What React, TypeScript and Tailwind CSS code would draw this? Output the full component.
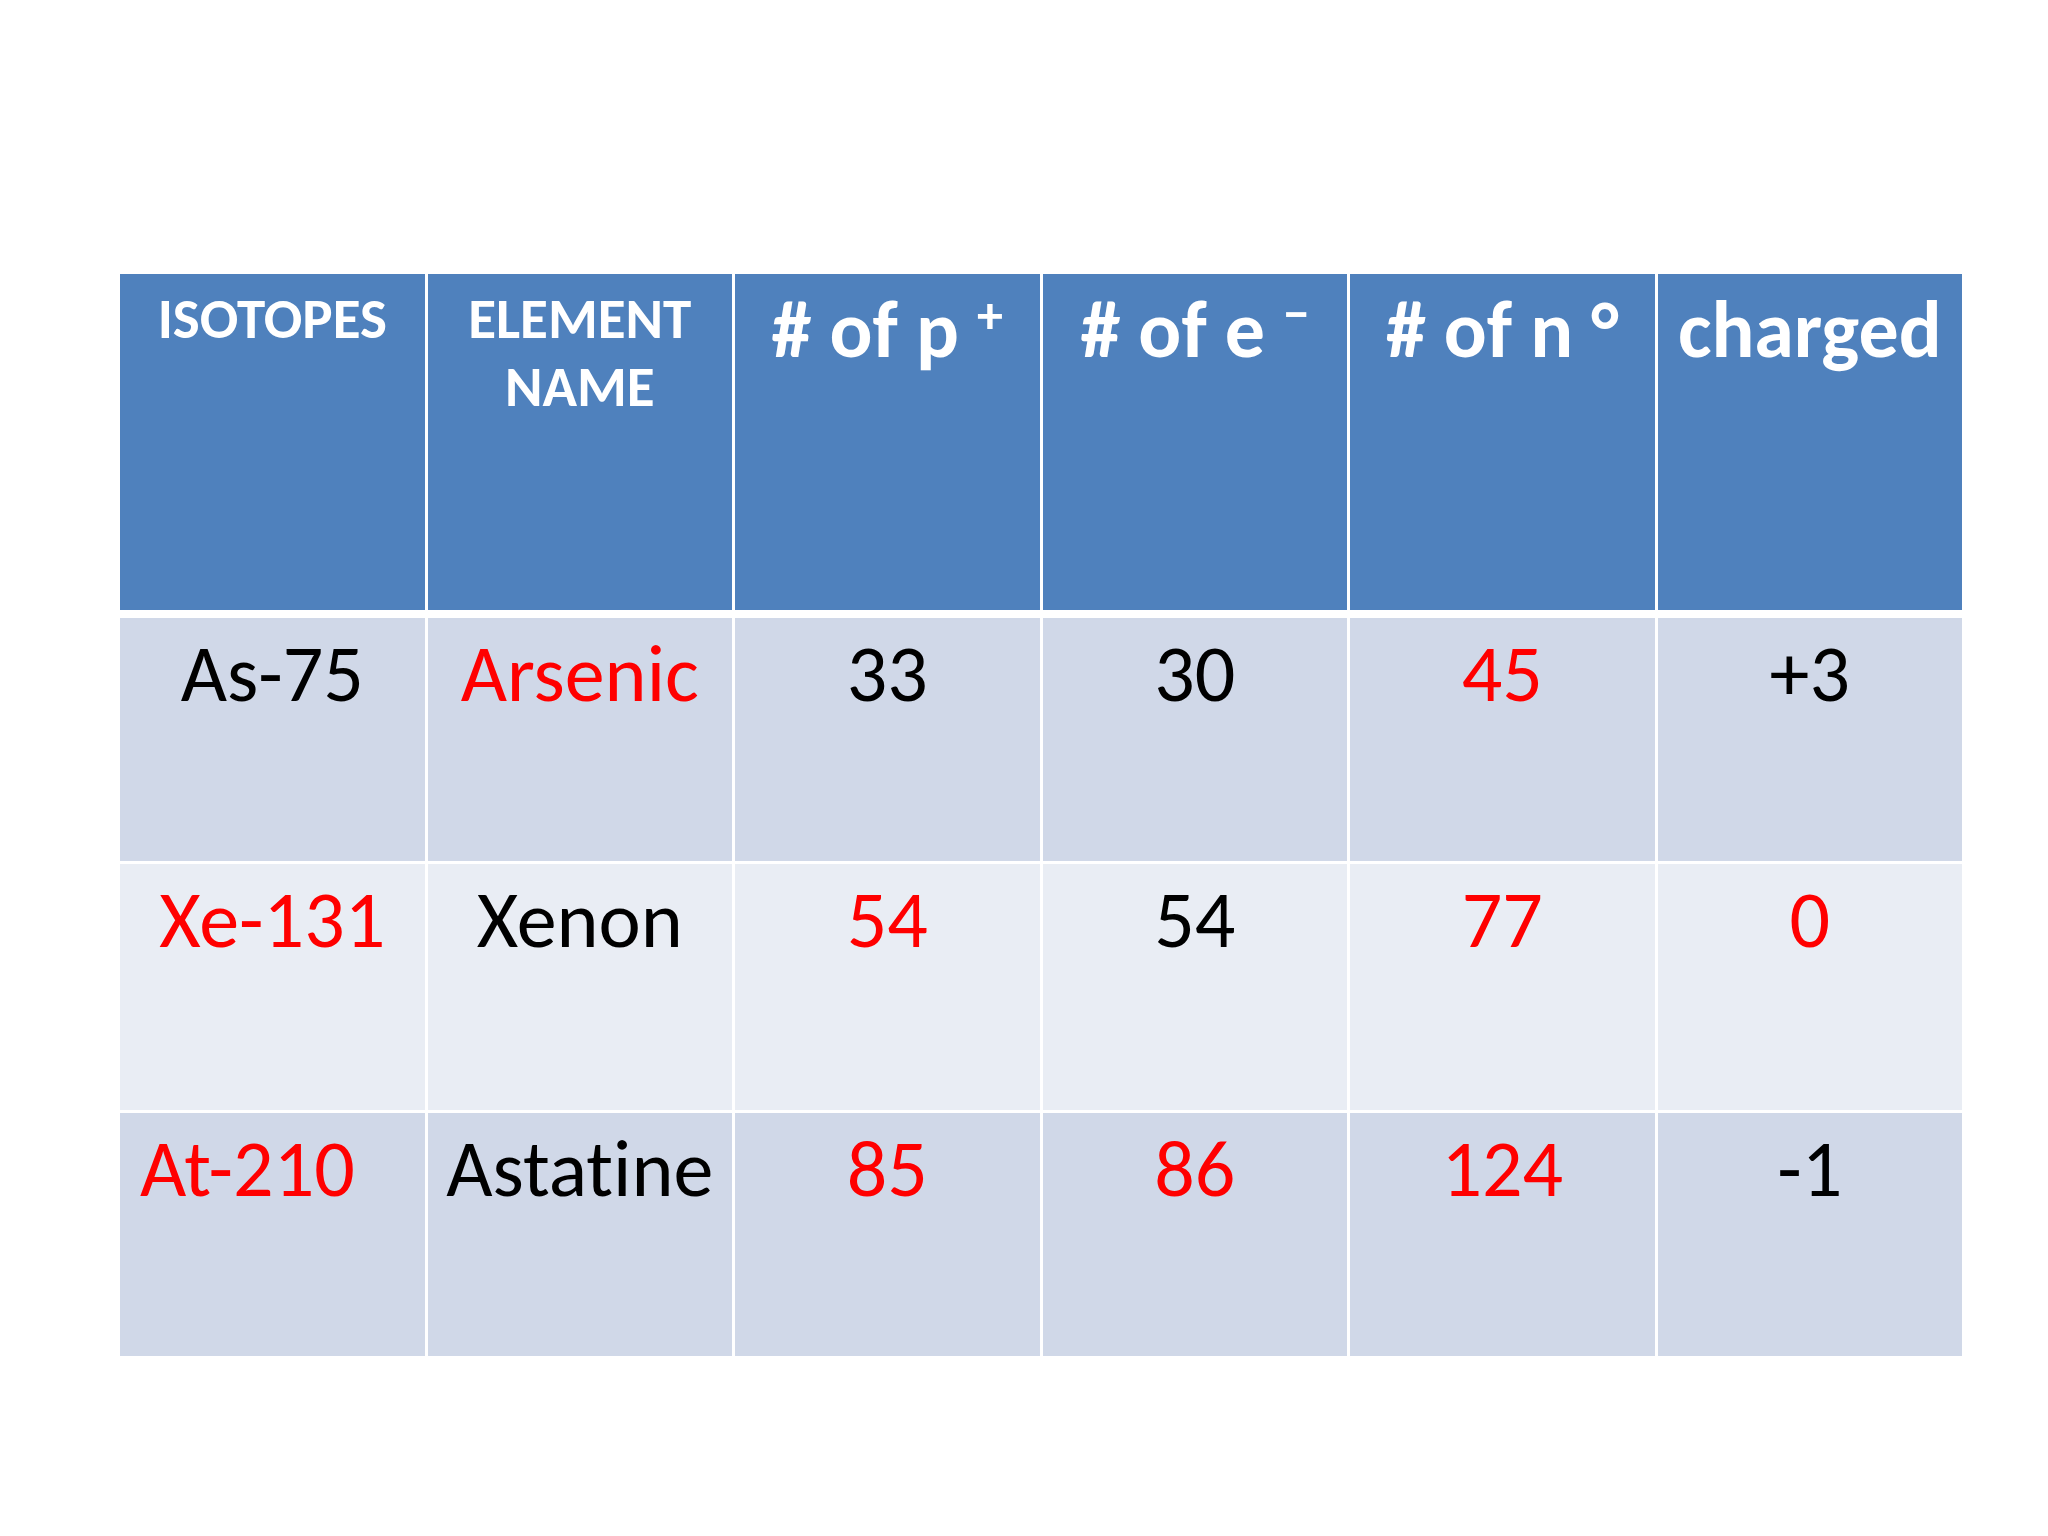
const FONT = "font-['Carlito','Liberation_Sans_Narrow','Open_Sans',sans-serif] [font-variant-ligatures:none]";

type Cell = { text: string; red?: boolean; left?: boolean };

const ROWS: { bg: string; h: string; cells: Cell[] }[] = [
  {
    bg: 'bg-[#d0d8e8]',
    h: 'h-[243px]',
    cells: [
      { text: 'As-75' },
      { text: 'Arsenic', red: true },
      { text: '33' },
      { text: '30' },
      { text: '45', red: true },
      { text: '+3' },
    ],
  },
  {
    bg: 'bg-[#e9edf4]',
    h: 'h-[246px]',
    cells: [
      { text: 'Xe-131', red: true },
      { text: 'Xenon' },
      { text: '54', red: true },
      { text: '54' },
      { text: '77', red: true },
      { text: '0', red: true },
    ],
  },
  {
    bg: 'bg-[#d0d8e8]',
    h: 'h-[243px]',
    cells: [
      { text: 'At-210', red: true, left: true },
      { text: 'Astatine' },
      { text: '85', red: true },
      { text: '86', red: true },
      { text: '124', red: true },
      { text: '-1' },
    ],
  },
];

function HeadCell({ children, small }: { children: React.ReactNode; small?: boolean }) {
  return (
    <div
      className={`bg-[#4f81bd] text-white font-bold text-center px-[10px] ${
        small ? 'pt-[11px] text-[57px] leading-[68px]' : 'pt-[7px] text-[80px] leading-[97px]'
      }`}
    >
      {children}
    </div>
  );
}

export default function App() {
  return (
    <div className={`min-h-[1536px] w-[2048px] bg-white pt-[274px] pl-[120px] ${FONT}`}>
      <div className="w-[1842px] flex flex-col">
        <div className="grid grid-cols-6 gap-x-[3px] h-[336px]">
          <HeadCell small>ISOTOPES</HeadCell>
          <HeadCell small>
            ELEMENT
            <br />
            NAME
          </HeadCell>
          <HeadCell>
            # of p <span className="text-[52px] leading-none relative top-[-24px]">+</span>
          </HeadCell>
          <HeadCell>
            # of e <span className="text-[52px] leading-none relative top-[-26px]">−</span>
          </HeadCell>
          <HeadCell>
            # of n <span className="relative top-[2px]">°</span>
          </HeadCell>
          <HeadCell>charged</HeadCell>
        </div>

        <div className="h-[8px]" />

        {ROWS.map((row, i) => (
          <div key={i} className={`grid grid-cols-6 gap-x-[3px] ${row.h} ${i > 0 ? 'mt-[3px]' : ''}`}>
            {row.cells.map((c, j) => (
              <div
                key={j}
                className={`${row.bg} pt-[7px] text-[80px] leading-[97px] ${
                  c.left ? 'text-left pl-[20px]' : 'text-center px-[10px]'
                } ${c.red ? 'text-[#ff0000]' : 'text-black'}`}
              >
                {c.text}
              </div>
            ))}
          </div>
        ))}
      </div>
    </div>
  );
}
